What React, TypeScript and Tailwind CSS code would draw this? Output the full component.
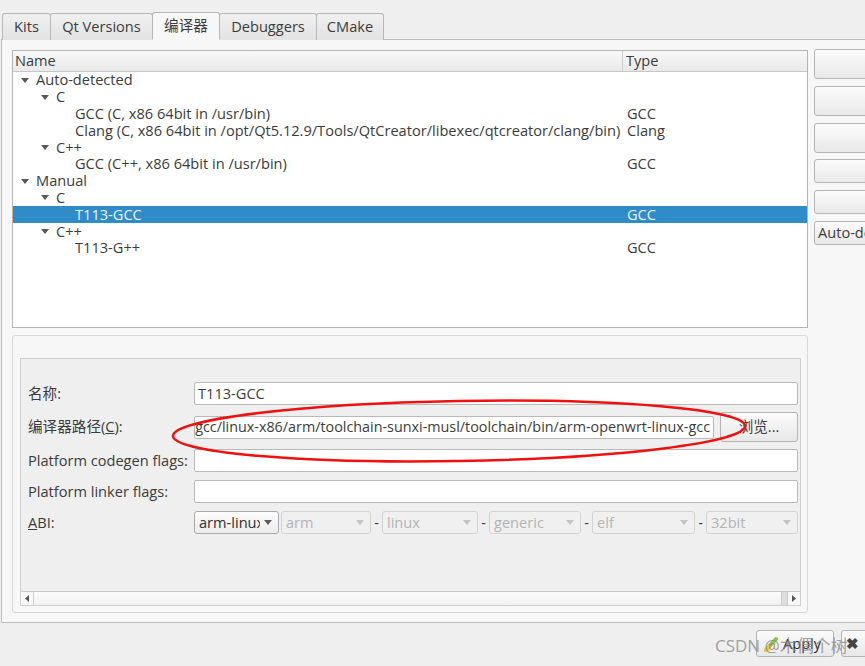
import { ReactNode } from 'react'

const font = '"Open Sans", "Noto Sans CJK SC", sans-serif'

function Arrow({ light }: { light?: boolean }) {
  return (
    <svg width="8" height="5" viewBox="0 0 8 5" className="shrink-0">
      <polygon points="0,0 8,0 4,5" fill={light ? '#c4c4c4' : '#5a5a5a'} />
    </svg>
  )
}

type Row = { level: number; text: string; type?: string; open?: boolean; selected?: boolean }

const rows: Row[] = [
  { level: 0, text: 'Auto-detected', open: true },
  { level: 1, text: 'C', open: true },
  { level: 2, text: 'GCC (C, x86 64bit in /usr/bin)', type: 'GCC' },
  { level: 2, text: 'Clang (C, x86 64bit in /opt/Qt5.12.9/Tools/QtCreator/libexec/qtcreator/clang/bin)', type: 'Clang' },
  { level: 1, text: 'C++', open: true },
  { level: 2, text: 'GCC (C++, x86 64bit in /usr/bin)', type: 'GCC' },
  { level: 0, text: 'Manual', open: true },
  { level: 1, text: 'C', open: true },
  { level: 2, text: 'T113-GCC', type: 'GCC', selected: true },
  { level: 1, text: 'C++', open: true },
  { level: 2, text: 'T113-G++', type: 'GCC' },
]

const tabs = [
  { t: 'Kits', w: 'w-[49px]' },
  { t: 'Qt Versions', w: 'w-[103px]' },
  { t: '编译器', w: 'w-[68px]' },
  { t: 'Debuggers', w: 'w-[98px]' },
  { t: 'CMake', w: 'w-[68px]' },
]

function TreeRow({ row }: { row: Row }) {
  const indent = row.level === 0 ? 'pl-[8px]' : row.level === 1 ? 'pl-[28px]' : 'pl-[62px]'
  return (
    <div
      className={`flex items-center h-[16.8px] ${row.selected ? 'bg-[#308cc6] text-[#e8f3fb]' : ''}`}
    >
      <div className={`w-[610px] flex items-center gap-[7px] whitespace-nowrap ${indent}`}>
        {row.open && <Arrow />}
        <span>{row.text}</span>
      </div>
      <div className="pl-[4px]">{row.type}</div>
    </div>
  )
}

function SideButton({ h, children }: { h: string; children?: ReactNode }) {
  return (
    <div
      className={`${h} w-[60px] rounded-[3px] border border-[#b4b4b4] bg-gradient-to-b from-[#fbfbfb] to-[#e9e9e9] flex items-center pl-[3px] whitespace-nowrap overflow-hidden`}
    >
      {children}
    </div>
  )
}

function Input({ children, right }: { children?: ReactNode; right?: boolean }) {
  return (
    <div
      className={`flex-1 min-w-0 h-full bg-white border border-[#b9b9b9] rounded-[2px] flex items-center px-[3px] overflow-hidden whitespace-nowrap ${
        right ? 'justify-end' : ''
      }`}
    >
      {children}
    </div>
  )
}

function Combo({ w, text, enabled }: { w: string; text: string; enabled?: boolean }) {
  return (
    <div
      className={`${w} shrink-0 h-full rounded-[3px] border flex items-center gap-[4px] pl-[4px] pr-[6px] ${
        enabled
          ? 'border-[#a9a9a9] bg-gradient-to-b from-[#fdfdfd] to-[#ececec] text-[#2f2f2f]'
          : 'border-[#d3d3d3] bg-[#f0f0f0] text-[#b4b4b4]'
      }`}
    >
      <span className="flex-1 min-w-0 overflow-hidden whitespace-nowrap">{text}</span>
      <Arrow light={!enabled} />
    </div>
  )
}

function Dash() {
  return <span className="w-[11px] shrink-0 text-center text-[#3c3c3c]">-</span>
}

export default function App() {
  return (
    <div
      className="relative w-[865px] h-[666px] bg-[#efefef] overflow-hidden text-[14.6px] text-[#3c3c3c]"
      style={{ fontFamily: font }}
    >
      {/* tabs */}
      <div className="flex items-end pl-[2px] pt-[12px] h-[40px]">
        {tabs.map(({ t, w }) => {
          const active = t === '编译器'
          return (
            <div
              key={t}
              className={`${w} h-[27px] -mr-px flex items-center justify-center border border-[#b7b7b7] rounded-t-[3px] ${
                active
                  ? 'bg-[#f7f7f7] border-b-[#f7f7f7] h-[28px] relative z-10'
                  : 'bg-gradient-to-b from-[#f0f0f0] to-[#e3e3e3] border-b-0'
              }`}
            >
              {t}
            </div>
          )
        })}
      </div>

      {/* pane */}
      <div className="-mt-px ml-[1px] w-[880px] h-[584px] border border-[#bcbcbc] bg-[#f7f7f7] flex gap-[6px] pl-[10px] pt-[10px]">
        <div className="w-[796px] flex flex-col gap-[7px]">
          {/* tree */}
          <div className="h-[278px] bg-white border border-[#b4b4b4]">
            <div className="h-[21px] flex bg-gradient-to-b from-[#f8f8f8] to-[#e9e9e9] border-b border-[#c6c6c6]">
              <div className="w-[610px] pl-[2px] border-r border-[#cdcdcd] flex items-center">Name</div>
              <div className="pl-[3px] flex items-center">Type</div>
            </div>
            {rows.map((r, i) => (
              <TreeRow key={i} row={r} />
            ))}
          </div>

          {/* details */}
          <div className="h-[278px] rounded-[3px] border border-[#d8d8d8] bg-[#f7f7f7] pt-[22px] pl-[7px] pr-[6px] pb-[6px] flex flex-col">
            <div className="flex-1 flex flex-col border border-[#cfcfcf] bg-[#efefef]">
              <div className="flex-1 pl-[7px] pr-[2px] pt-[23px]">
                <div className="flex items-center h-[23px]">
                  <span className="w-[166px] shrink-0">名称:</span>
                  <Input>T113-GCC</Input>
                </div>
                <div className="flex items-center h-[30px] mt-[7px]">
                  <span className="w-[166px] shrink-0">
                    编译器路径(<span className="underline">C</span>):
                  </span>
                  <div className="flex-1 min-w-0 h-[23px] flex">
                    <Input right>
                      <span className="text-[14.35px]">
                        gcc/linux-x86/arm/toolchain-sunxi-musl/toolchain/bin/arm-openwrt-linux-gcc
                      </span>
                    </Input>
                  </div>
                  <div className="ml-[6px] w-[78px] shrink-0 h-[30px] rounded-[3px] border border-[#b4b4b4] bg-gradient-to-b from-[#fbfbfb] to-[#e8e8e8] flex items-center justify-center">
                    浏览...
                  </div>
                </div>
                <div className="flex items-center h-[23px] mt-[7px]">
                  <span className="w-[166px] shrink-0">Platform codegen flags:</span>
                  <Input />
                </div>
                <div className="flex items-center h-[23px] mt-[8px]">
                  <span className="w-[166px] shrink-0">Platform linker flags:</span>
                  <Input />
                </div>
                <div className="flex items-center h-[23px] mt-[8px]">
                  <span className="w-[166px] shrink-0">
                    <span className="underline">A</span>BI:
                  </span>
                  <Combo w="w-[85px]" text="arm-linux" enabled />
                  <div className="w-[3px]" />
                  <Combo w="w-[90px]" text="arm" />
                  <Dash />
                  <Combo w="w-[96px]" text="linux" />
                  <Dash />
                  <Combo w="w-[92px]" text="generic" />
                  <Dash />
                  <Combo w="w-[103px]" text="elf" />
                  <Dash />
                  <Combo w="w-[92px]" text="32bit" />
                </div>
              </div>
              {/* horizontal scrollbar */}
              <div className="h-[14px] border-t border-[#c8c8c8] bg-[#f8f8f8] flex items-center">
                <div className="w-[12px] flex justify-center">
                  <svg width="4" height="7" viewBox="0 0 4 7">
                    <polygon points="4,0 4,7 0,3.5" fill="#555" />
                  </svg>
                </div>
                <div className="flex-1 h-full border-l border-[#cfcfcf] bg-gradient-to-b from-[#fcfcfc] to-[#f1f1f1]" />
                <div className="w-[7px] h-full bg-[#dedede] border-x border-[#cacaca]" />
                <div className="w-[12px] flex justify-center">
                  <svg width="4" height="7" viewBox="0 0 4 7">
                    <polygon points="0,0 0,7 4,3.5" fill="#555" />
                  </svg>
                </div>
              </div>
            </div>
          </div>
        </div>

        {/* right buttons */}
        <div className="flex flex-col -mt-px">
          <SideButton h="h-[30px]" />
          <div className="h-[7px]" />
          <SideButton h="h-[30px]" />
          <div className="h-[7px]" />
          <SideButton h="h-[30px]" />
          <div className="h-[6px]" />
          <SideButton h="h-[24px]" />
          <div className="h-[7px]" />
          <SideButton h="h-[24px]" />
          <div className="h-[7px]" />
          <SideButton h="h-[24px]">Auto-detect</SideButton>
        </div>
      </div>

      {/* bottom buttons */}
      <div className="flex justify-end gap-[7px] pt-[7px] -mr-[30px]">
        <div className="w-[78px] h-[27px] rounded-[3px] border border-[#b4b4b4] bg-gradient-to-b from-[#fbfbfb] to-[#e8e8e8] flex items-center gap-[4px] pl-[6px]">
          <svg width="16" height="16" viewBox="0 0 16 16">
            <path d="M3 14 L13 3" stroke="#8cc63f" strokeWidth="4" strokeLinecap="round" />
            <path d="M3 14 L6 11" stroke="#f2c230" strokeWidth="4" strokeLinecap="round" />
          </svg>
          <span className="text-[#222]">Apply</span>
        </div>
        <div className="w-[54px] h-[27px] rounded-[3px] border border-[#b4b4b4] bg-gradient-to-b from-[#fbfbfb] to-[#e8e8e8] flex items-center pl-[4px]">
          <span className="text-[#444] text-[15px] font-bold">✖</span>
        </div>
      </div>

      {/* watermark */}
      <div className="absolute left-[715px] top-[633px] text-[17px] text-[#8a8a8a]/80 pointer-events-none whitespace-nowrap">
        CSDN @木偶个树
      </div>

      {/* red annotation ellipse */}
      <svg className="absolute left-0 top-0 pointer-events-none" width="865" height="666">
        <ellipse
          cx="459"
          cy="431"
          rx="286"
          ry="30"
          fill="none"
          stroke="#f01010"
          strokeWidth="2.5"
          transform="rotate(-1 459 431)"
        />
      </svg>
    </div>
  )
}
